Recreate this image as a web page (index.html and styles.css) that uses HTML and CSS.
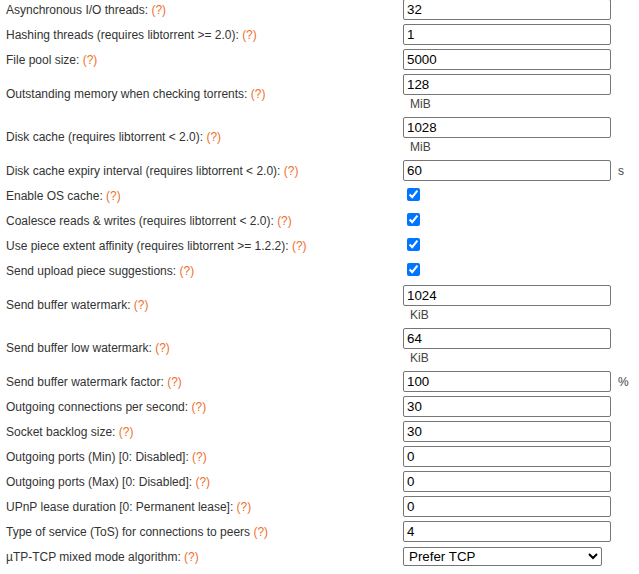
FILE: index.html
```html
<!DOCTYPE html>
<html>
<head>
<meta charset="utf-8">
<link rel="stylesheet" href="styles.css">
</head>
<body>
<div class="form">
  <div class="row"><div class="label">Asynchronous I/O threads: <span class="hint">(?)</span></div><div class="value"><div class="line"><input class="text" type="text" value="32"></div></div></div>
  <div class="row"><div class="label">Hashing threads (requires libtorrent &gt;= 2.0): <span class="hint">(?)</span></div><div class="value"><div class="line"><input class="text" type="text" value="1"></div></div></div>
  <div class="row"><div class="label">File pool size: <span class="hint">(?)</span></div><div class="value"><div class="line"><input class="text" type="text" value="5000"></div></div></div>
  <div class="row"><div class="label">Outstanding memory when checking torrents: <span class="hint">(?)</span></div><div class="value"><div class="line"><input class="text" type="text" value="128"></div><div class="unit">MiB</div></div></div>
  <div class="row"><div class="label">Disk cache (requires libtorrent &lt; 2.0): <span class="hint">(?)</span></div><div class="value"><div class="line"><input class="text" type="text" value="1028"></div><div class="unit">MiB</div></div></div>
  <div class="row"><div class="label">Disk cache expiry interval (requires libtorrent &lt; 2.0): <span class="hint">(?)</span></div><div class="value"><div class="line"><input class="text" type="text" value="60"><span class="unit-inline">s</span></div></div></div>
  <div class="row"><div class="label">Enable OS cache: <span class="hint">(?)</span></div><div class="value"><div class="line"><input class="check" type="checkbox" checked></div></div></div>
  <div class="row"><div class="label">Coalesce reads &amp; writes (requires libtorrent &lt; 2.0): <span class="hint">(?)</span></div><div class="value"><div class="line"><input class="check" type="checkbox" checked></div></div></div>
  <div class="row"><div class="label">Use piece extent affinity (requires libtorrent &gt;= 1.2.2): <span class="hint">(?)</span></div><div class="value"><div class="line"><input class="check" type="checkbox" checked></div></div></div>
  <div class="row"><div class="label">Send upload piece suggestions: <span class="hint">(?)</span></div><div class="value"><div class="line"><input class="check" type="checkbox" checked></div></div></div>
  <div class="row"><div class="label">Send buffer watermark: <span class="hint">(?)</span></div><div class="value"><div class="line"><input class="text" type="text" value="1024"></div><div class="unit">KiB</div></div></div>
  <div class="row"><div class="label">Send buffer low watermark: <span class="hint">(?)</span></div><div class="value"><div class="line"><input class="text" type="text" value="64"></div><div class="unit">KiB</div></div></div>
  <div class="row"><div class="label">Send buffer watermark factor: <span class="hint">(?)</span></div><div class="value"><div class="line"><input class="text" type="text" value="100"><span class="unit-inline">%</span></div></div></div>
  <div class="row"><div class="label">Outgoing connections per second: <span class="hint">(?)</span></div><div class="value"><div class="line"><input class="text" type="text" value="30"></div></div></div>
  <div class="row"><div class="label">Socket backlog size: <span class="hint">(?)</span></div><div class="value"><div class="line"><input class="text" type="text" value="30"></div></div></div>
  <div class="row"><div class="label">Outgoing ports (Min) [0: Disabled]: <span class="hint">(?)</span></div><div class="value"><div class="line"><input class="text" type="text" value="0"></div></div></div>
  <div class="row"><div class="label">Outgoing ports (Max) [0: Disabled]: <span class="hint">(?)</span></div><div class="value"><div class="line"><input class="text" type="text" value="0"></div></div></div>
  <div class="row"><div class="label">UPnP lease duration [0: Permanent lease]: <span class="hint">(?)</span></div><div class="value"><div class="line"><input class="text" type="text" value="0"></div></div></div>
  <div class="row"><div class="label">Type of service (ToS) for connections to peers <span class="hint">(?)</span></div><div class="value"><div class="line"><input class="text" type="text" value="4"></div></div></div>
  <div class="row"><div class="label">µTP-TCP mixed mode algorithm: <span class="hint">(?)</span></div><div class="value"><div class="line"><select class="select"><option>Prefer TCP</option><option>Peer proportional (throttles TCP)</option></select></div></div></div>
  <div class="row"><div class="label">Support internationalized domain name (IDN) support: <span class="hint">(?)</span></div><div class="value"><div class="line"><input class="check" type="checkbox"></div></div></div>
</div>
</body>
</html>
```

FILE: styles.css
```css
html, body {
  margin: 0;
  padding: 0;
  overflow: hidden;
  background: #ffffff;
}

body {
  font-family: "Liberation Sans", Arial, sans-serif;
  font-size: 12px;
  line-height: 18px;
  color: #333333;
}

.form {
  display: flex;
  flex-direction: column;
  gap: 2px;
  margin: -2px 0 0 5px;
}

.row {
  display: grid;
  grid-template-columns: 395px 232px;
  column-gap: 2px;
}

.label {
  align-self: center;
  padding: 1px;
  white-space: nowrap;
}

.hint {
  color: #ef6f2c;
}

.value {
  padding: 1px;
}

.line {
  display: flex;
  align-items: center;
  height: 21px;
}

.text {
  box-sizing: border-box;
  width: 208px;
  height: 21px;
  margin: 0;
  padding: 1px 3px;
  border: 1px solid #767676;
  border-radius: 2px;
  background: #ffffff;
  color: #000000;
  font-family: "Liberation Sans", Arial, sans-serif;
  font-size: 13.333px;
  outline: none;
}

.check {
  align-self: flex-start;
  width: 13px;
  height: 13px;
  margin: 3px 0 0 4px;
  accent-color: #0075ff;
}

.select {
  box-sizing: border-box;
  width: 199px;
  height: 19px;
  margin: 0;
  padding: 0 0 0 1px;
  border: 1px solid #767676;
  border-radius: 2px;
  background: #ffffff;
  color: #000000;
  font-family: "Liberation Sans", Arial, sans-serif;
  font-size: 13.333px;
}

.unit-inline {
  margin-left: 7px;
  color: #444444;
}

.unit {
  padding-left: 7px;
  line-height: 18px;
  color: #444444;
}
```
